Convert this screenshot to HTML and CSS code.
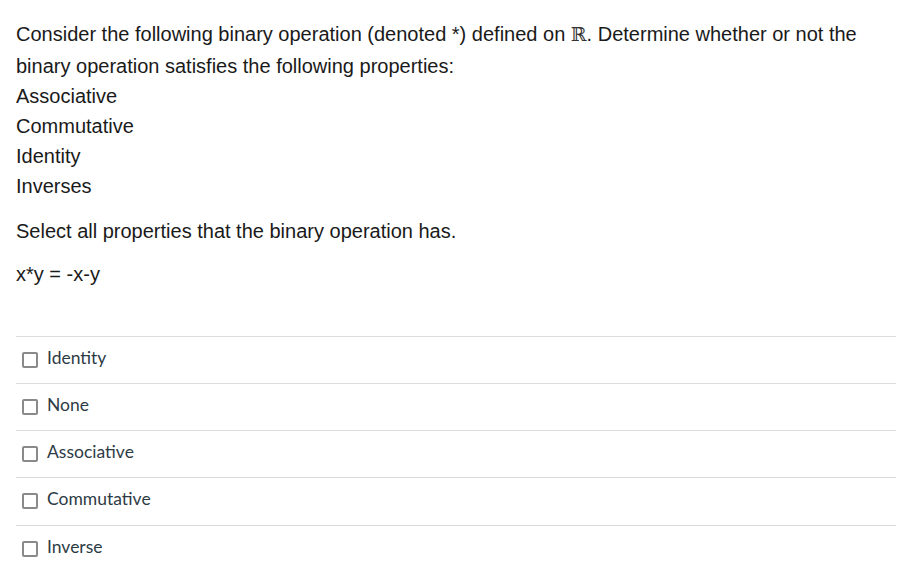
FILE: index.html
```html
<!DOCTYPE html>
<html>
<head>
<meta charset="utf-8">
<link rel="stylesheet" href="styles.css">
</head>
<body>
<div class="question">
  <div class="text">
    <p class="intro">Consider the following binary operation (denoted *) defined on <span class="dbl">ℝ</span>. Determine whether or not the<br>binary operation satisfies the following properties:<br>Associative<br>Commutative<br>Identity<br>Inverses</p>
    <p class="select">Select all properties that the binary operation has.</p>
    <p class="formula">x*y = -x-y</p>
  </div>
  <div class="answers">
    <label class="answer"><span class="box"></span><span class="lbl">Identity</span></label>
    <label class="answer"><span class="box"></span><span class="lbl">None</span></label>
    <label class="answer"><span class="box"></span><span class="lbl">Associative</span></label>
    <label class="answer"><span class="box"></span><span class="lbl">Commutative</span></label>
    <label class="answer"><span class="box"></span><span class="lbl">Inverse</span></label>
  </div>
</div>
</body>
</html>
```
FILE: styles.css
```css
html, body {
  margin: 0;
  padding: 0;
  background: #ffffff;
}
.question {
  padding: 17px 2px 0 16px;
}
.text {
  font-family: "Liberation Sans", Arial, sans-serif;
  font-size: 20px;
  color: #1a1a1a;
}
.text p {
  margin: 0;
  line-height: 30px;
}
.dbl {
  font-family: "DejaVu Serif", serif;
  font-size: 19px;
  line-height: 34px;
  color: #333;
}
.select {
  margin-top: 15px !important;
}
.formula {
  margin-top: 13px !important;
}
.answers {
  margin-top: 47px;
  font-family: Lato, "Noto Sans", sans-serif;
  font-size: 17.5px;
  color: #2d3b45;
}
.answer {
  display: flex;
  align-items: center;
  gap: 9px;
  height: 42px;
  padding-bottom: 4px;
  border-top: 1px solid #dcdcdc;
  padding-left: 6px;
}
.answer:last-child {
  margin-top: 1px;
}
.box {
  width: 12px;
  height: 12px;
  border: 2px solid #8a8a8a;
  border-radius: 2px;
  background: #fff;
  flex: none;
  margin-top: 3px;
}
.lbl {
  line-height: 20px;
}
```
